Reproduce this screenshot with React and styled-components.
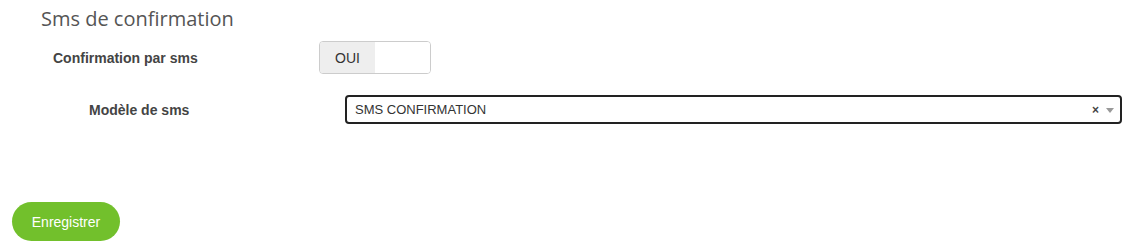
import React from 'react'
import styled, { createGlobalStyle } from 'styled-components'

const GlobalStyle = createGlobalStyle`
  body {
    margin: 0;
    background: #fff;
    font-family: "Liberation Sans", Arial, sans-serif;
  }
`

const Page = styled.div`
  width: 1139px;
  height: 246px;
  box-sizing: border-box;
  padding-top: 5px;
`

const Title = styled.h3`
  margin: 0 0 0 41px;
  font-family: "Open Sans", sans-serif;
  font-weight: 400;
  font-size: 20px;
  line-height: 27px;
  color: #555;
`

const Row = styled.div`
  display: flex;
  align-items: center;
  margin-top: ${p => p.$top}px;
`

const Label = styled.label`
  box-sizing: border-box;
  width: ${p => p.$width}px;
  padding-left: ${p => p.$indent}px;
  font-size: 14px;
  font-weight: 700;
  color: #444;
`

const Toggle = styled.div`
  display: flex;
  width: 112px;
  height: 33px;
  box-sizing: border-box;
  border: 1px solid #ccc;
  border-radius: 4px;
  overflow: hidden;
`

const ToggleOn = styled.span`
  width: 55px;
  display: flex;
  align-items: center;
  justify-content: center;
  background: #eee;
  font-size: 14px;
  color: #333;
`

const ToggleOff = styled.span`
  flex: 1;
  background: #fff;
`

const Select = styled.div`
  width: 777px;
  height: 29px;
  box-sizing: border-box;
  border: 2px solid #222;
  border-radius: 4px;
  display: flex;
  align-items: center;
  padding: 0 6px 0 8px;
  font-size: 13px;
  color: #333;
`

const Value = styled.span`
  flex: 1;
`

const Clear = styled.span`
  font-size: 12px;
  font-weight: 700;
  color: #444;
  margin-right: 7px;
`

const Arrow = styled.span`
  width: 0;
  height: 0;
  border-left: 4px solid transparent;
  border-right: 4px solid transparent;
  border-top: 5px solid #999;
  margin-top: 1px;
`

const SaveButton = styled.button`
  margin: 78px 0 0 12px;
  width: 108px;
  height: 39px;
  border: none;
  border-radius: 20px;
  background: #72c02c;
  color: #fff;
  font-family: "Liberation Sans", Arial, sans-serif;
  font-size: 14px;
  cursor: pointer;
`

export default function App() {
  return (
    <Page>
      <GlobalStyle />
      <Title>Sms de confirmation</Title>
      <Row $top={9}>
        <Label $width={319} $indent={53}>Confirmation par sms</Label>
        <Toggle>
          <ToggleOn>OUI</ToggleOn>
          <ToggleOff />
        </Toggle>
      </Row>
      <Row $top={21}>
        <Label $width={345} $indent={89}>Modèle de sms</Label>
        <Select>
          <Value>SMS CONFIRMATION</Value>
          <Clear>×</Clear>
          <Arrow />
        </Select>
      </Row>
      <SaveButton>Enregistrer</SaveButton>
    </Page>
  )
}
